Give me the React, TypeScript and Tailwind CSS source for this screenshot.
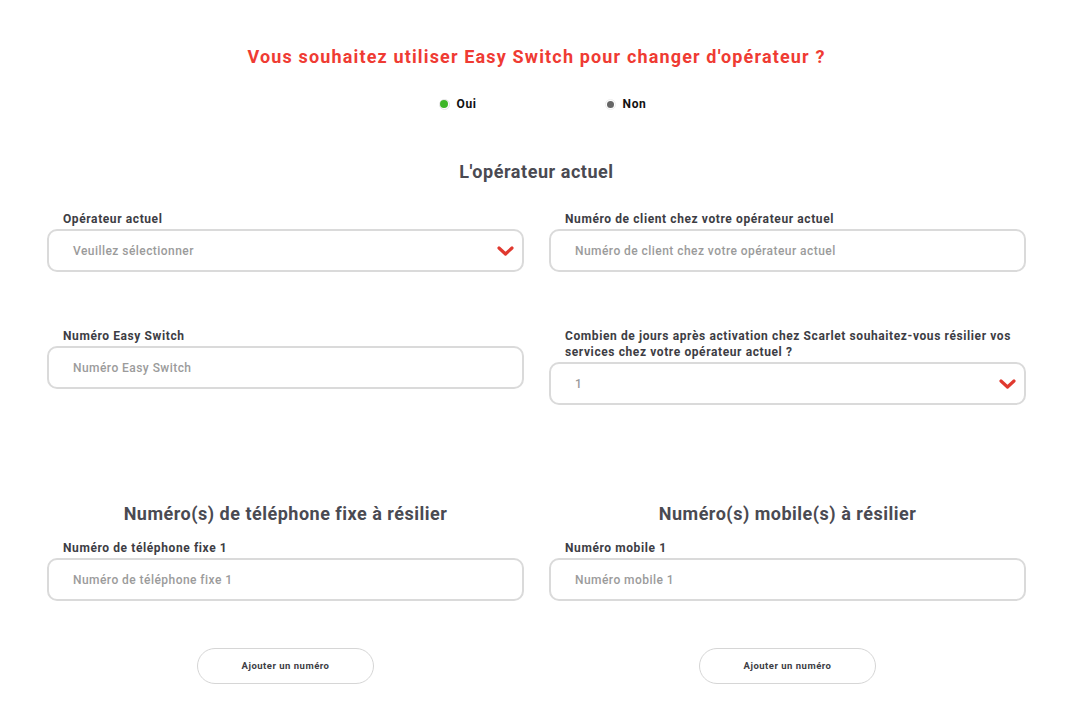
import React from "react";

const Chevron = () => (
  <svg width="17" height="10" viewBox="0 0 17 10" className="shrink-0">
    <path d="M2 2 L8.5 8 L15 2" fill="none" stroke="#e0392f" strokeWidth="3.2" strokeLinecap="round" strokeLinejoin="round" />
  </svg>
);

const Field = ({ label, placeholder, select }: { label: React.ReactNode; placeholder: string; select?: boolean }) => (
  <div className="flex flex-col">
    <label className="text-[12px] leading-[16px] font-bold tracking-[0.6px] text-[#3d3d44] pl-[16px]">{label}</label>
    <div className="mt-[2px] h-[43px] rounded-[10px] border-2 border-[#dadada] flex items-center justify-between pl-[24px] pr-[8px]">
      <span className="text-[12px] font-medium tracking-[0.45px] text-[#9b9b9b]">{placeholder}</span>
      {select && <Chevron />}
    </div>
  </div>
);

const AddButton = () => (
  <button className="self-center w-[177px] h-[36px] rounded-full border border-[#d6d6d6] text-[9.5px] tracking-[0.5px] font-bold text-[#3d3d44] bg-white">
    Ajouter un numéro
  </button>
);

const App = () => {
  return (
    <div className="w-[1075px] h-[710px] bg-white pl-[47px] pr-[49px] pt-[45px] flex flex-col" style={{ fontFamily: "Roboto, 'Liberation Sans', sans-serif" }}>
      {/* QUESTION */}
      <h1 className="text-center text-[18px] leading-[24px] font-bold tracking-[1.15px] text-[#ef3b33]">
        Vous souhaitez utiliser Easy Switch pour changer d'opérateur ?
      </h1>
      <div className="mt-[27px] h-[16px] pl-[12px] flex justify-center items-center gap-[128px] text-[12px] tracking-[0.6px] font-bold text-[#111]">
        <div className="flex items-center gap-[7px]">
          <span className="w-[11px] h-[11px] rounded-full border border-[#e4e4e4] flex items-center justify-center">
            <span className="w-[8px] h-[8px] rounded-full bg-[#3cb526]"></span>
          </span>
          Oui
        </div>
        <div className="flex items-center gap-[7px]">
          <span className="w-[11px] h-[11px] rounded-full border border-[#eeeeee] flex items-center justify-center">
            <span className="w-[7px] h-[7px] rounded-full bg-[#666]"></span>
          </span>
          Non
        </div>
      </div>

      {/* OPERATEUR ACTUEL */}
      <h2 className="mt-[48px] text-center text-[18px] leading-[24px] font-bold tracking-[0.55px] text-[#4a4a52]">L'opérateur actuel</h2>
      <div className="mt-[27px] grid grid-cols-2 gap-x-[25px] gap-y-[56px] items-start">
        <Field label="Opérateur actuel" placeholder="Veuillez sélectionner" select />
        <Field label="Numéro de client chez votre opérateur actuel" placeholder="Numéro de client chez votre opérateur actuel" />
        <Field label="Numéro Easy Switch" placeholder="Numéro Easy Switch" />
        <Field
          label={<>Combien de jours après activation chez Scarlet souhaitez-vous résilier vos<br />services chez votre opérateur actuel ?</>}
          placeholder="1"
          select
        />
      </div>

      {/* NUMEROS */}
      <div className="mt-[97px] grid grid-cols-2 gap-x-[25px]">
        <div className="flex flex-col">
          <h2 className="text-center text-[18px] leading-[24px] font-bold tracking-[0.5px] text-[#4a4a52]">Numéro(s) de téléphone fixe à résilier</h2>
          <div className="mt-[14px]">
            <Field label="Numéro de téléphone fixe 1" placeholder="Numéro de téléphone fixe 1" />
          </div>
          <div className="mt-[47px] flex justify-center">
            <AddButton />
          </div>
        </div>
        <div className="flex flex-col">
          <h2 className="text-center text-[18px] leading-[24px] font-bold tracking-[0.5px] text-[#4a4a52]">Numéro(s) mobile(s) à résilier</h2>
          <div className="mt-[14px]">
            <Field label="Numéro mobile 1" placeholder="Numéro mobile 1" />
          </div>
          <div className="mt-[47px] flex justify-center">
            <AddButton />
          </div>
        </div>
      </div>
    </div>
  );
};

export default App;
